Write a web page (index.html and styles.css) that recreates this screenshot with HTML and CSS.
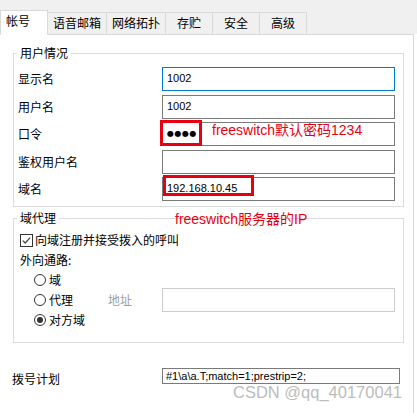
FILE: index.html
```html
<!DOCTYPE html>
<html lang="zh-CN">
<head>
<meta charset="utf-8">
<title>帐号</title>
<link rel="stylesheet" href="styles.css">
</head>
<body>
  <div class="tabs">
    <div class="tab active">帐号</div>
    <div class="tab">语音邮箱</div>
    <div class="tab">网络拓扑</div>
    <div class="tab">存贮</div>
    <div class="tab">安全</div>
    <div class="tab">高级</div>
  </div>

  <div class="panel">
    <fieldset class="group user-group">
      <legend>用户情况</legend>
      <div class="form-grid">
        <div class="label">显示名</div>
        <div class="input focused">1002</div>

        <div class="label">用户名</div>
        <div class="input">1002</div>

        <div class="label">口令</div>
        <div class="input">
          <span class="dots">●●●●</span>
          <span class="mark mark-pwd"></span>
          <span class="note note-pwd">freeswitch默认密码1234</span>
        </div>

        <div class="label">鉴权用户名</div>
        <div class="input"></div>

        <div class="label">域名</div>
        <div class="input">
          192.168.10.45
          <span class="mark mark-domain"></span>
        </div>
      </div>
    </fieldset>

    <fieldset class="group proxy-group">
      <legend>域代理</legend>
      <span class="note note-ip">freeswitch服务器的IP</span>
      <div class="proxy-body">
        <div class="row">
          <svg class="checkbox" width="13" height="13" viewBox="0 0 13 13">
            <rect x="0.5" y="0.5" width="12" height="12" fill="#fff" stroke="#333"/>
            <path d="M2.8 6.6 L5.2 9 L10.2 3.6" fill="none" stroke="#444" stroke-width="1.3"/>
          </svg>
          <span class="check-text">向域注册并接受拨入的呼叫</span>
        </div>
        <div class="row">外向通路:</div>
        <div class="row radio-row">
          <svg class="radio" width="12" height="12" viewBox="0 0 12 12">
            <circle cx="6" cy="6" r="5.5" fill="#fff" stroke="#333"/>
          </svg>
          <span class="radio-text">域</span>
        </div>
        <div class="row radio-row addr-row">
          <div class="radio-cell">
            <svg class="radio" width="12" height="12" viewBox="0 0 12 12">
              <circle cx="6" cy="6" r="5.5" fill="#fff" stroke="#333"/>
            </svg>
            <span class="radio-text">代理</span>
          </div>
          <div class="disabled-label">地址</div>
          <div class="input disabled"></div>
        </div>
        <div class="row radio-row">
          <svg class="radio" width="12" height="12" viewBox="0 0 12 12">
            <circle cx="6" cy="6" r="5.5" fill="#fff" stroke="#333"/>
            <circle cx="6" cy="6" r="3" fill="#333"/>
          </svg>
          <span class="radio-text">对方域</span>
        </div>
      </div>
    </fieldset>

    <div class="dial">
      <div class="dial-label">拨号计划</div>
      <div class="input small">#1\a\a.T;match=1;prestrip=2;</div>
    </div>
  </div>

  <div class="watermark">CSDN @qq_40170041</div>
</body>
</html>
```

FILE: styles.css
```css
* {
  box-sizing: border-box;
}

html,
body {
  margin: 0;
  padding: 0;
}

body {
  position: relative;
  width: 417px;
  height: 413px;
  overflow: hidden;
  background: #fff;
  color: #000;
  font-family: "Noto Sans CJK SC", "Noto Sans", sans-serif;
  font-size: 12px;
}

/* tab strip */
.tabs {
  display: flex;
  align-items: flex-end;
  height: 34px;
  background: #f0f0f0;
}

.tab {
  height: 22px;
  min-width: 48px;
  padding: 0 5px;
  margin-right: -1px;
  border: 1px solid #d9d9d9;
  border-bottom: none;
  background: #f0f0f0;
  line-height: 20px;
  text-align: center;
  white-space: nowrap;
}

.tab.active {
  position: relative;
  z-index: 1;
  height: 25px;
  margin-bottom: -1px;
  padding: 0 17px 0 5px;
  background: #fff;
  text-align: left;
}

/* page body */
.panel {
  width: 414px;
  height: 379px;
  border-top: 1px solid #d9d9d9;
  border-right: 1px solid #d9d9d9;
  background: #fff;
}

.group {
  position: relative;
  width: 391px;
  min-width: 0;
  margin: 0 0 0 13px;
  padding: 0;
  border: 1px solid #dcdcdc;
}

.group legend {
  margin-left: 3px;
  padding: 0 3px;
  font-size: 12px;
  line-height: 16px;
}

.user-group {
  margin-top: 10px;
  padding-bottom: 5px;
}

.proxy-group {
  margin-top: 3px;
  padding-bottom: 12px;
}

.form-grid {
  display: grid;
  grid-template-columns: 144px 233px;
  grid-auto-rows: 24px;
  row-gap: 3.5px;
  align-items: center;
  padding: 6px 0 0 4px;
}

.label {
  line-height: 20px;
  white-space: nowrap;
}

.input {
  position: relative;
  height: 24px;
  padding-left: 4px;
  border: 1px solid #7a7a7a;
  background: #fff;
  font-family: "Liberation Sans", Arial, sans-serif;
  font-size: 11px;
  line-height: 20px;
  white-space: nowrap;
}

.input.focused {
  border-color: #0078d7;
}

.input.disabled {
  border-color: #cccccc;
}

.dots {
  font-family: "DejaVu Sans", sans-serif;
  font-size: 8px;
  letter-spacing: 0.5px;
  vertical-align: top;
  line-height: 22px;
}

/* red annotation boxes and notes */
.mark {
  position: absolute;
  border: 3px solid #e60012;
}

.mark-pwd {
  left: -3px;
  top: -3px;
  width: 42px;
  height: 26px;
}

.mark-domain {
  left: 0;
  top: -3px;
  width: 91px;
  height: 21px;
}

.note {
  position: absolute;
  color: #e8000f;
  font-family: "Liberation Sans", "Noto Sans CJK SC", sans-serif;
  font-size: 14px;
  line-height: 16px;
  white-space: nowrap;
}

.note-pwd {
  left: 49px;
  top: -1px;
}

.note-ip {
  left: 161px;
  top: -15px;
}

/* domain proxy group */
.proxy-body {
  padding: 4px 0 0 6px;
}

.row {
  display: flex;
  align-items: center;
  height: 20px;
  line-height: 20px;
  white-space: nowrap;
}

.checkbox {
  display: block;
  flex: none;
}

.check-text {
  margin-left: 2px;
}

.radio-row {
  padding-left: 14px;
}

.radio {
  display: block;
  flex: none;
}

.radio-text {
  margin-left: 3px;
}

.addr-row {
  display: grid;
  grid-template-columns: 74px 54px 233px;
  align-items: center;
}

.radio-cell {
  display: flex;
  align-items: center;
}

.disabled-label {
  color: #a0a0a0;
}

.addr-row .input {
  margin: -2px 0;
}

/* dial plan */
.dial {
  display: grid;
  grid-template-columns: 150px 238px;
  align-items: start;
  margin-top: 25px;
  padding-left: 12px;
}

.dial-label {
  margin-top: 3px;
  line-height: 16px;
}

.input.small {
  height: 16px;
  padding-left: 3px;
  line-height: 14px;
}

.watermark {
  position: absolute;
  right: 15px;
  top: 383px;
  color: #bcbcbc;
  font-family: "Liberation Sans", Arial, sans-serif;
  font-size: 16.5px;
  line-height: 18px;
  white-space: nowrap;
}
```
